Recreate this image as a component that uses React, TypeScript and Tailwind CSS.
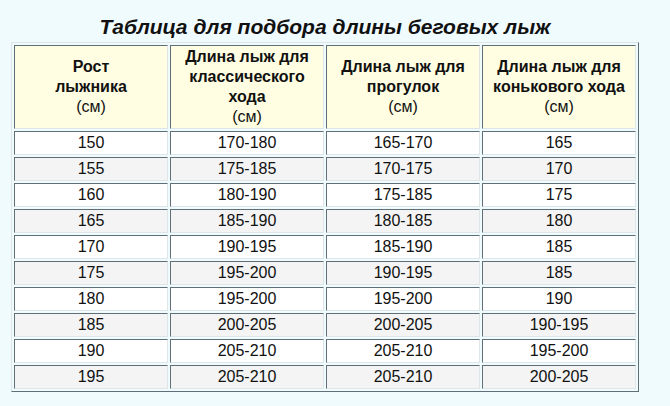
import React from "react";

const rows: [string, string, string, string][] = [
  ["150", "170-180", "165-170", "165"],
  ["155", "175-185", "170-175", "170"],
  ["160", "180-190", "175-185", "175"],
  ["165", "185-190", "180-185", "180"],
  ["170", "190-195", "185-190", "185"],
  ["175", "195-200", "190-195", "185"],
  ["180", "195-200", "195-200", "190"],
  ["185", "200-205", "200-205", "190-195"],
  ["190", "205-210", "205-210", "195-200"],
  ["195", "205-210", "205-210", "200-205"],
];

const headers: string[][] = [
  ["Рост", "лыжника"],
  ["Длина лыж для", "классического", "хода"],
  ["Длина лыж для", "прогулок"],
  ["Длина лыж для", "конькового хода"],
];

const cellBorder =
  "border border-t-[#5f6e77] border-l-[#5f6e77] border-r-[#dfe6ea] border-b-[#dfe6ea]";

export default function App() {
  return (
    <div
      className="min-h-[406px] w-[670px] bg-[#f0fbfe] pt-[14px] text-[#111]"
      style={{ fontFamily: '"Liberation Sans", Arial, sans-serif' }}
    >
      <div className="ml-[11px] w-[628px]">
        <h1 className="mb-[2px] text-center text-[21px] font-bold italic leading-[26px]">
          Таблица для подбора длины беговых лыж
        </h1>
        <table className="w-[628px] table-fixed border-separate border-spacing-[2px] border border-t-[#dfe6ea] border-l-[#dfe6ea] border-r-[#5f6e77] border-b-[#5f6e77]">
          <thead>
            <tr>
              {headers.map((lines, i) => (
                <th
                  key={i}
                  className={`${cellBorder} h-[84px] bg-[#fffee2] p-0 text-center align-middle text-[16px] leading-[20px]`}
                >
                  {lines.map((l, j) => (
                    <div key={j} className="font-bold">
                      {l}
                    </div>
                  ))}
                  <div className="font-normal">(см)</div>
                </th>
              ))}
            </tr>
          </thead>
          <tbody>
            {rows.map((r, i) => (
              <tr key={i}>
                {r.map((v, j) => (
                  <td
                    key={j}
                    className={`${cellBorder} h-[24px] p-0 text-center align-middle text-[16px] leading-[20px] ${
                      i % 2 === 0 ? "bg-white" : "bg-[#f4f4f4]"
                    }`}
                  >
                    {v}
                  </td>
                ))}
              </tr>
            ))}
          </tbody>
        </table>
      </div>
    </div>
  );
}
